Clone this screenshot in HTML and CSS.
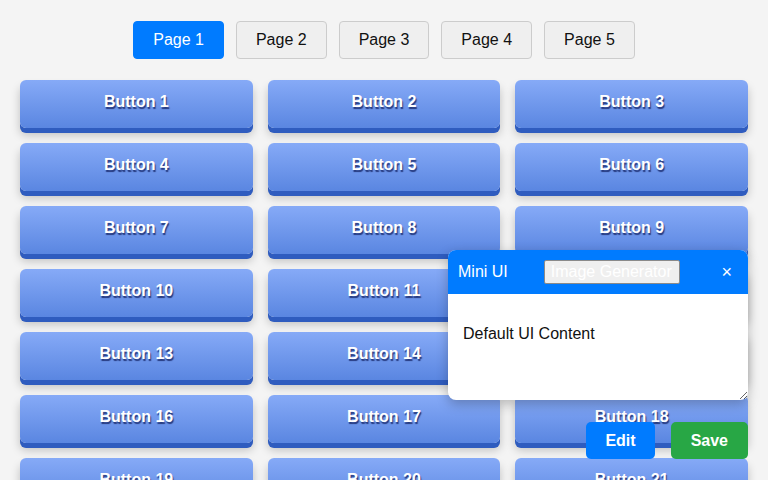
FILE: index.html
```html
<!DOCTYPE html>
<html lang="en">
<head>
<meta charset="utf-8">
<title>Pages</title>
<link rel="stylesheet" href="styles.css">
</head>
<body>
<nav class="pager">
  <button class="page active">Page 1</button>
  <button class="page">Page 2</button>
  <button class="page">Page 3</button>
  <button class="page">Page 4</button>
  <button class="page">Page 5</button>
</nav>
<main class="grid">
  <button class="tile">Button 1</button>
  <button class="tile">Button 2</button>
  <button class="tile">Button 3</button>
  <button class="tile">Button 4</button>
  <button class="tile">Button 5</button>
  <button class="tile">Button 6</button>
  <button class="tile">Button 7</button>
  <button class="tile">Button 8</button>
  <button class="tile">Button 9</button>
  <button class="tile">Button 10</button>
  <button class="tile">Button 11</button>
  <button class="tile">Button 12</button>
  <button class="tile">Button 13</button>
  <button class="tile">Button 14</button>
  <button class="tile">Button 15</button>
  <button class="tile">Button 16</button>
  <button class="tile">Button 17</button>
  <button class="tile">Button 18</button>
  <button class="tile">Button 19</button>
  <button class="tile">Button 20</button>
  <button class="tile">Button 21</button>
</main>
<section class="mini">
  <header class="mini-head">
    <span class="mini-title">Mini UI</span>
    <input class="mini-input" type="text" placeholder="Image Generator">
    <button class="mini-close">×</button>
  </header>
  <div class="mini-body">
    <p>Default UI Content</p>
  </div>
</section>
<div class="actions">
  <button class="act edit">Edit</button>
  <button class="act save">Save</button>
</div>
</body>
</html>
```
FILE: styles.css
```css
html, body {
  margin: 0;
  height: 100%;
  overflow: hidden;
}
body {
  padding: 20px;
  box-sizing: border-box;
  background: #f4f4f4;
  font-family: "Liberation Sans", Arial, sans-serif;
  font-size: 16px;
}
.pager {
  display: flex;
  justify-content: center;
  gap: 12px;
  margin: 1px 0 21px;
}
.page {
  font-family: inherit;
  font-size: 16px;
  padding: 9px 19px 10px;
  border: 1px solid #cccccc;
  border-radius: 4px;
  background: #efefef;
  color: #111;
  line-height: 17px;
}
.page.active {
  background: #007bff;
  border-color: #007bff;
  color: #fff;
}
.grid {
  display: grid;
  grid-template-columns: repeat(3, 1fr);
  column-gap: 15px;
  row-gap: 15px;
}
.tile {
  height: 48px;
  border: none;
  border-radius: 6px;
  background: linear-gradient(to bottom, #86aaf7, #5a86e1);
  box-shadow: 0 5px 0 #2f5cbf, 0 7px 10px rgba(0, 0, 0, 0.22);
  color: #fff;
  font-family: inherit;
  font-size: 16px;
  font-weight: bold;
  line-height: 18px;
  padding: 0 0 4px;
  text-shadow: 1px 2px 1px rgba(20, 35, 100, 0.8);
}
.mini {
  position: absolute;
  left: 448px;
  top: 250px;
  width: 300px;
  height: 150px;
  background: #fff;
  border-radius: 8px;
  box-shadow: 0 4px 12px rgba(0, 0, 0, 0.25);
  overflow: auto;
  resize: both;
}
.mini-head {
  display: flex;
  align-items: center;
  height: 44px;
  box-sizing: border-box;
  padding: 0 10px;
  background: #007bff;
  color: #fff;
}
.mini-title {
  font-size: 16px;
}
.mini-input {
  width: 136px;
  height: 24px;
  box-sizing: border-box;
  margin-left: 36px;
  padding: 1px 6px;
  border: 1px solid #8a8a8a;
  border-radius: 2px;
  background: #efefef;
  font-family: inherit;
  font-size: 16px;
  color: #fff;
}
.mini-input::placeholder {
  color: #fff;
  opacity: 1;
}
.mini-close {
  margin-left: auto;
  background: none;
  border: none;
  color: #fff;
  font-family: inherit;
  font-size: 18px;
  padding: 0 6px;
  cursor: pointer;
}
.mini-body {
  padding: 15px;
  color: #111;
}
.mini-body p {
  margin: 16px 0;
}
.actions {
  position: fixed;
  right: 20px;
  bottom: 21px;
  display: flex;
  gap: 16px;
}
.act {
  border: none;
  border-radius: 5px;
  padding: 10px 19px;
  font-family: inherit;
  font-size: 16px;
  font-weight: bold;
  line-height: 17px;
  color: #fff;
}
.edit {
  background: #007bff;
}
.save {
  background: #28a745;
  padding: 10px 20px;
}
```
